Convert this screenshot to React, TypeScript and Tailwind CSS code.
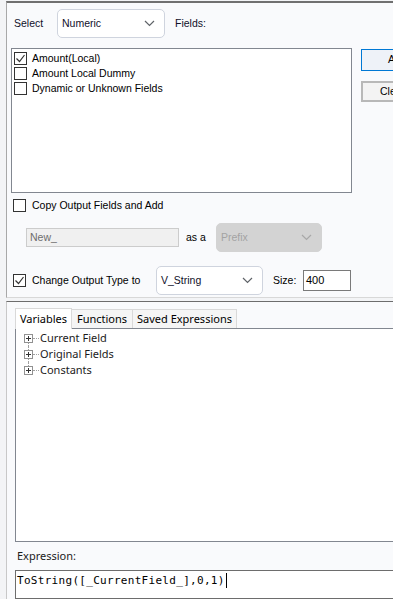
import React from "react";

const sans = "font-['Liberation_Sans',Arial,sans-serif]";
const ui = "font-['Noto_Sans','Open_Sans',sans-serif]";

function Chevron({ color = "#5f6368" }: { color?: string }) {
  return (
    <svg width="11" height="7" viewBox="0 0 11 7" fill="none">
      <path d="M1 1l4.5 4.5L10 1" stroke={color} strokeWidth="1.2" />
    </svg>
  );
}

function Check({ checked }: { checked?: boolean }) {
  return (
    <span className="w-[13px] h-[13px] border border-[#333333] bg-white flex items-center justify-center shrink-0">
      {checked && (
        <svg width="11" height="11" viewBox="0 0 11 11" fill="none">
          <path d="M1.5 5.5l3 3 5-6.5" stroke="#333333" strokeWidth="1.2" />
        </svg>
      )}
    </span>
  );
}

function Dropdown({ label, w, disabled }: { label: string; w: string; disabled?: boolean }) {
  return (
    <div
      className={`${w} h-[29px] rounded-[5px] border flex items-center justify-between pl-[4px] pr-[9px] ${
        disabled ? "bg-[#d3d3d3] border-[#d3d3d3] text-[#a3a3a3]" : "bg-white border-[#cfd4de] text-[#10102a]"
      }`}
    >
      <span>{label}</span>
      <Chevron color={disabled ? "#a8a8a8" : "#5f6368"} />
    </div>
  );
}

function TreeRow({ label, first, last }: { label: string; first?: boolean; last?: boolean }) {
  return (
    <div className="relative h-[16px] flex items-center pl-[8px]">
      {!first && <span className="absolute left-[12px] top-0 h-[4px] border-l border-dotted border-[#a0a0a0]" />}
      {!last && <span className="absolute left-[12px] bottom-0 h-[3px] border-l border-dotted border-[#a0a0a0]" />}
      <span className="w-[9px] h-[9px] border border-[#919191] bg-white flex items-center justify-center">
        <svg width="7" height="7" viewBox="0 0 7 7">
          <path d="M1 3.5h5M3.5 1v5" stroke="#333333" strokeWidth="1" />
        </svg>
      </span>
      <span className="w-[6px] border-t border-dotted border-[#a0a0a0] mr-[1px]" />
      <span className="text-[#1b1b1b]">{label}</span>
    </div>
  );
}

export default function App() {
  return (
    <div className={`w-[393px] h-[599px] overflow-hidden bg-[#f3f4f6] flex flex-col pt-[1px] pl-[6px] ${sans} text-[10.5px] text-black`}>
      {/* Top panel */}
      <div className="h-[297px] shrink-0 w-[440px] border-t-2 border-l border-t-[#707070] border-l-[#a8a8a8] border-b border-b-[#d8d8d8] bg-[#f9fafc] flex flex-col">
        <div className="flex items-center mt-[6px] h-[29px]">
          <span className="ml-[7px] w-[43px] text-[#10102a]">Select</span>
          <Dropdown label="Numeric" w="w-[108px]" />
          <span className="ml-[10px] text-[#10102a]">Fields:</span>
        </div>

        <div className="flex mt-[10px]">
          <div className="ml-[4px] w-[341px] h-[145px] border border-[#828790] bg-white pt-[2px] pl-[2px] flex flex-col">
            {[
              { label: "Amount(Local)", checked: true },
              { label: "Amount Local Dummy" },
              { label: "Dynamic or Unknown Fields" },
            ].map(({ label, checked }) => (
              <div key={label} className="h-[15px] flex items-center gap-[5px]">
                <Check checked={checked} />
                <span>{label}</span>
              </div>
            ))}
          </div>
          <div className="ml-[9px] flex flex-col gap-[10px] pt-[1px]">
            <div className="w-[80px] h-[22px] border border-[#0078d4] bg-[#eef2f8] flex items-center pl-[26px]">Add</div>
            <div className="w-[80px] h-[21px] border-2 border-[#b8b8b8] bg-[#f3f3f3] flex items-center pl-[17px]">Clear</div>
          </div>
        </div>

        <div className="flex items-center gap-[6px] ml-[6px] mt-[6px] h-[13px]">
          <Check />
          <span>Copy Output Fields and Add</span>
        </div>

        <div className="flex items-center mt-[11px] h-[29px]">
          <div className="ml-[19px] w-[153px] h-[19px] bg-[#f0f0f0] border border-[#cccccc] text-[#6d6d6d] flex items-center pl-[3px]">New_</div>
          <span className="ml-[7px] w-[30px]">as a</span>
          <Dropdown label="Prefix" w="w-[106px]" disabled />
        </div>

        <div className="flex items-center mt-[14px] h-[29px]">
          <span className="ml-[6px] flex items-center gap-[6px] w-[143px]">
            <Check checked />
            <span>Change Output Type to</span>
          </span>
          <Dropdown label="V_String" w="w-[107px]" />
          <span className="ml-[10px] w-[30px]">Size:</span>
          <div className="w-[48px] h-[21px] border border-[#7a7a7a] bg-white flex items-center pl-[2px] text-[11px]">400</div>
        </div>
      </div>

      {/* Lower panel */}
      <div className={`mt-[3px] flex-1 w-[440px] border-t border-l border-t-[#6d6d6d] border-l-[#c8c8c8] bg-[#f9fafc] flex flex-col ${ui} text-[11px]`}>
        <div className="flex items-end h-[26px] ml-[8px]">
          <div className="relative z-10 h-[21px] w-[57px] bg-white border border-b-0 border-[#d9d9d9] flex items-center justify-center -mb-px">Variables</div>
          <div className="h-[19px] w-[61px] bg-[#f5f5f5] border border-l-0 border-b-0 border-[#d9d9d9] flex items-center justify-center">Functions</div>
          <div className="h-[19px] w-[104px] bg-[#f5f5f5] border border-l-0 border-b-0 border-[#d9d9d9] flex items-center justify-center">Saved Expressions</div>
        </div>
        <div className="ml-[8px] h-[214px] border border-[#828790] bg-white pt-[1px]">
          <TreeRow label="Current Field" first />
          <TreeRow label="Original Fields" />
          <TreeRow label="Constants" last />
        </div>
        <div className="ml-[10px] h-[27px] flex items-center mt-[1px] text-[#1b1b1b]">Expression:</div>
        <div className="ml-[8px] flex-1 border border-[#6d6d6d] bg-white flex items-start pt-[2px] pl-px font-['DejaVu_Sans_Mono',monospace] text-[11px] tracking-[0.3px] text-black">
          <span>ToString([_CurrentField_],0,1)</span>
          <span className="w-px h-[15px] bg-black ml-[1px]" />
        </div>
      </div>
    </div>
  );
}
